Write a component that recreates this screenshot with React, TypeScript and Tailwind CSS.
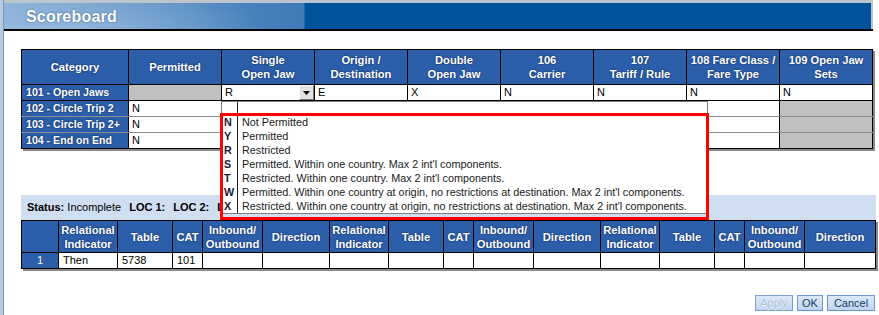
import React from "react";

const F = "font-['Liberation_Sans',Arial,sans-serif]";

const topCols = [
  "Category",
  "Permitted",
  "Single|Open Jaw",
  "Origin /|Destination",
  "Double|Open Jaw",
  "106|Carrier",
  "107|Tariff / Rule",
  "108 Fare Class /|Fare Type",
  "109 Open Jaw|Sets",
];

const bottomGroup = ["Relational|Indicator", "Table", "CAT", "Inbound/|Outbound", "Direction"];

const options: [string, string][] = [
  ["N", "Not Permitted"],
  ["Y", "Permitted"],
  ["R", "Restricted"],
  ["S", "Permitted. Within one country. Max 2 int'l components."],
  ["T", "Restricted. Within one country. Max 2 int'l components."],
  ["W", "Permitted. Within one country at origin, no restrictions at destination. Max 2 int'l components."],
  ["X", "Restricted. Within one country at origin, no restrictions at destination. Max 2 int'l components."],
];

function HeadText({ t }: { t: string }) {
  const parts = t.split("|");
  return (
    <>
      {parts.map((p, i) => (
        <React.Fragment key={i}>
          {i > 0 && <br />}
          {p}
        </React.Fragment>
      ))}
    </>
  );
}

export default function App() {
  const thCls =
    "bg-[#2c5ea9] text-white font-bold text-[11.2px] leading-[14px] border border-black text-center align-middle p-0 [text-shadow:0_0_2px_rgba(0,10,50,0.7)]";
  const catCls =
    "bg-[#2c5ea9] text-white font-bold text-[10.6px] leading-[15px] text-left pl-[4px] p-0 border-l border-r border-black whitespace-nowrap [text-shadow:0_0_2px_rgba(0,10,50,0.7)]";
  const cellCls =
    "bg-white text-black text-[11px] leading-[15px] text-left pl-[3px] p-0 border-l border-r border-black";
  const bottomWidths = ["w-[59px]", "w-[55px]", "w-[30px]", "w-[60px]", "w-[67px]"];

  return (
    <div className={`relative w-[879px] h-[315px] overflow-hidden bg-white flex ${F}`}>
      <div className="w-[3px] h-full bg-[#b3cbe4]" />
      <div className="w-[1px] h-full bg-[#8b97a3]" />
      <div className="flex flex-col w-[875px]">
        {/* title bar */}
        <div className="w-[869px] h-[29px] border-t-[3px] border-r-2 border-[#bcc5ce] flex items-center pt-[2px] pl-[22px] bg-[radial-gradient(ellipse_170px_70px_at_90px_40px,rgba(190,215,240,0.55),rgba(190,215,240,0)),linear-gradient(90deg,#86aed6_0px,#5f92c6_120px,#3f7bb9_300px,#00529b_301px)]">
          <span className="text-white font-bold text-[16px] tracking-[0.2px] [text-shadow:0_0_2px_rgba(0,20,60,0.6)]">
            Scoreboard
          </span>
        </div>
        <div className="w-[869px] h-[2px] bg-black" />

        <div className="pl-[17px] pt-[18px] flex flex-col">
          {/* top table */}
          <table className="border-collapse table-fixed w-[852px] shadow-[2px_2px_0_#8a8a8a]">
            <colgroup>
              <col className="w-[107px]" />
              {Array.from({ length: 8 }).map((_, i) => (
                <col key={i} className="w-[93px]" />
              ))}
            </colgroup>
            <thead>
              <tr className="h-[35px]">
                {topCols.map((c) => (
                  <th key={c} className={thCls}>
                    <HeadText t={c} />
                  </th>
                ))}
              </tr>
            </thead>
            <tbody>
              <tr className="h-[16px]">
                <td className={`${catCls} border-b border-b-black`}>101 - Open Jaws</td>
                <td className="bg-[#c0c0c0] p-0 border-l border-r border-b border-black" />
                <td className="bg-white p-0 border-l border-r border-b border-black">
                  <div className="flex h-[15px] items-stretch">
                    <div className="flex-1 text-[11px] pl-[3px] leading-[15px] text-black">R</div>
                    <div className="w-[15px] bg-[#e2e2e2] border-t border-l border-t-white border-l-white border-b border-r border-b-[#7a7a7a] border-r-[#7a7a7a] flex items-center justify-center">
                      <svg width="7" height="4" viewBox="0 0 7 4">
                        <polygon points="0,0 7,0 3.5,4" fill="#000" />
                      </svg>
                    </div>
                  </div>
                </td>
                {["E", "X", "N", "N", "N", "N"].map((v, i) => (
                  <td key={i} className={`${cellCls} border-b border-b-black`}>
                    {v}
                  </td>
                ))}
              </tr>
              {["102 - Circle Trip 2", "103 - Circle Trip 2+", "104 - End on End"].map((c, i) => {
                const bb = i === 2 ? "border-b border-b-black" : "border-b border-b-[#8c8c8c]";
                return (
                  <tr key={c} className="h-[16px]">
                    <td className={`${catCls} ${bb}`}>{c}</td>
                    <td colSpan={7} className={`${cellCls} ${bb}`}>
                      N
                    </td>
                    <td className={`bg-[#c0c0c0] p-0 border-l border-r border-black ${bb}`} />
                  </tr>
                );
              })}
            </tbody>
          </table>

          {/* status bar */}
          <div className="mt-[46px] w-[855px] h-[25px] bg-[#cfdef0] flex items-center pl-[6px] gap-[8px] text-[11px] text-black whitespace-nowrap">
            <span>
              <b>Status:</b> Incomplete
            </span>
            <b>LOC 1:</b>
            <b>LOC 2:</b>
            <b>LOC 3:</b>
          </div>

          {/* bottom table */}
          <table className="border-collapse table-fixed w-[854px] shadow-[2px_2px_0_#8a8a8a]">
            <colgroup>
              <col className="w-[37px]" />
              {[0, 1, 2].map((g) =>
                bottomWidths.map((w, i) => (
                  <col key={`${g}-${i}`} className={g === 2 && i === 4 ? "w-[71px]" : w} />
                ))
              )}
            </colgroup>
            <thead>
              <tr className="h-[32px]">
                <th className={thCls} />
                {[0, 1, 2].map((g) =>
                  bottomGroup.map((c) => (
                    <th key={`${g}-${c}`} className={thCls}>
                      <HeadText t={c} />
                    </th>
                  ))
                )}
              </tr>
            </thead>
            <tbody>
              <tr className="h-[16px]">
                <td className="bg-[#2c5ea9] text-white text-[11px] leading-[15px] text-center p-0 border border-black">
                  1
                </td>
                {["Then", "5738", "101", "", "", "", "", "", "", "", "", "", "", "", ""].map((v, i) => (
                  <td
                    key={i}
                    className="bg-white text-black text-[11px] leading-[15px] text-left pl-[4px] p-0 border border-black"
                  >
                    {v}
                  </td>
                ))}
              </tr>
            </tbody>
          </table>

          {/* buttons */}
          <div className="mt-[26px] w-[854px] flex justify-end gap-[4px]">
            <button className="w-[38px] h-[16px] border border-[#79a0cf] bg-[linear-gradient(#dce9f7,#bfd5ee)] text-[11px] leading-[14px] text-[#a8bcd2] [text-shadow:0_1px_0_#fff]">
              Apply
            </button>
            <button className="w-[26px] h-[16px] border border-[#6a96cc] bg-[linear-gradient(#dce9f7,#bfd5ee)] text-[11px] leading-[14px] text-[#1b3a6b]">
              OK
            </button>
            <button className="w-[48px] h-[16px] border border-[#6a96cc] bg-[linear-gradient(#dce9f7,#bfd5ee)] text-[11px] leading-[14px] text-[#1b3a6b]">
              Cancel
            </button>
          </div>
        </div>
      </div>

      {/* open dropdown list */}
      <div className="absolute left-[221px] top-[101px] w-[487px] bg-white border border-[#7d7d7d] text-[10.8px] leading-[14px]">
        <div className="flex h-[13px]">
          <div className="w-[16px] border-r border-[#222]" />
          <div className="flex-1" />
        </div>
        {options.map(([k, d]) => (
          <div key={k} className="flex h-[14px]">
            <div className="w-[16px] border-r border-[#222] font-bold text-[#1a1a3a] pl-[2px]">{k}</div>
            <div className="flex-1 pl-[4px] text-[#1a1a1a] whitespace-nowrap">{d}</div>
          </div>
        ))}
      </div>
      {/* red annotation */}
      <div className="absolute left-[220px] top-[113px] w-[489px] h-[107px] border-[3px] border-[#ff0000]" />
    </div>
  );
}
